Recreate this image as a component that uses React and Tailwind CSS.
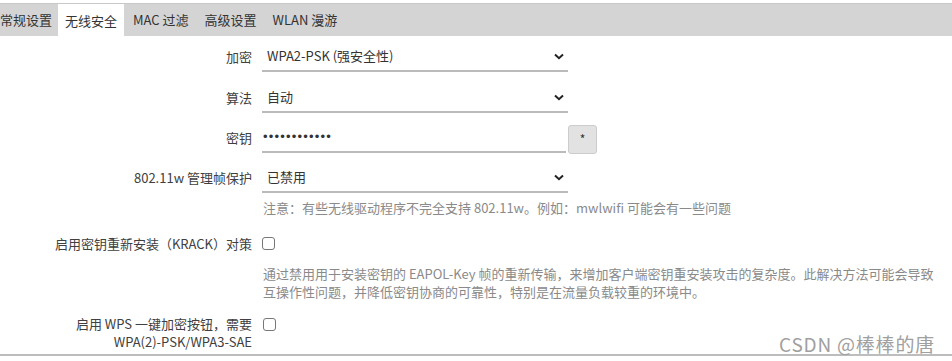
import React from 'react';

const font = { fontFamily: '"Noto Sans CJK SC", "Noto Sans", sans-serif' };

const Chevron = () => (
    <svg width="10" height="7" viewBox="0 0 10 7" className="mr-[2px]">
        <path d="M1 1.5 L5 5.2 L9 1.5" fill="none" stroke="#222" strokeWidth="2" />
    </svg>
);

const SelectBox = ({ value }) => (
    <div className="w-[306px] h-[30px] flex items-center justify-between pl-[5px] pr-[2px] border-b-2 border-[#bbbbbb] text-[13px] text-[#333]">
        <span>{value}</span>
        <Chevron />
    </div>
);

const Row = ({ label, children, className = '' }) => (
    <div className={`flex items-center ${className}`}>
        <div className="w-[253px] text-right text-[13px] text-[#404040] pr-[1px]">{label}</div>
        <div className="ml-[9px] flex items-center">{children}</div>
    </div>
);

const Checkbox = () => (
    <div className="w-[13px] h-[13px] border border-[#777] rounded-[3px] bg-white" />
);

const tabs = ['常规设置', '无线安全', 'MAC 过滤', '高级设置', 'WLAN 漫游'];

export default function App() {
    return (
        <div className="relative w-[952px] h-[361px] bg-white overflow-hidden" style={font}>
            <div className="mt-[3px] h-[33px] bg-[#d4d4d4] border-t border-[#c8c8c8] flex items-stretch text-[13px] text-[#333]">
                <div className="-ml-[5px] flex items-stretch">
                    {tabs.map((t, i) => (
                        <div
                            key={t}
                            className={`flex items-center ${i === 0 ? 'pl-[5px] pr-[6px]' : 'px-[7px]'} ${i === 1 ? 'bg-white h-[34px] px-[7px]' : ''} ${i > 1 ? 'ml-[2px]' : ''}`}
                        >
                            {t}
                        </div>
                    ))}
                </div>
            </div>

            <div className="pt-[6px]">
                <Row label="加密">
                    <SelectBox value="WPA2-PSK (强安全性)" />
                </Row>
                <Row label="算法" className="mt-[11px]">
                    <SelectBox value="自动" />
                </Row>
                <Row label="密钥" className="mt-[10px]">
                    <div
                        className="w-[304px] h-[30px] flex items-center pl-[1px] border-b-2 border-[#bbbbbb] text-[13px] text-[#333] tracking-[1.2px]"
                        style={{ fontFamily: '"Liberation Sans", Arial, sans-serif' }}
                    >
                        ••••••••••••
                    </div>
                    <div className="ml-[2px] w-[29px] h-[29px] mb-[-2px] rounded-[3px] bg-[#e2e2e2] border border-[#cccccc] flex items-center justify-center text-[12px] text-[#333]">
                        *
                    </div>
                </Row>
                <Row label="802.11w 管理帧保护" className="mt-[10px]">
                    <SelectBox value="已禁用" />
                </Row>
                <div className="ml-[263px] mt-[6px] text-[13px] text-[#8a8a8a] leading-[18px]">
                    注意：有些无线驱动程序不完全支持 802.11w。例如：mwlwifi 可能会有一些问题
                </div>

                <Row label="启用密钥重新安装（KRACK）对策" className="mt-[17px]">
                    <Checkbox />
                </Row>
                <div className="ml-[263px] mt-[11px] text-[13px] text-[#8a8a8a] leading-[18px]">
                    通过禁用用于安装密钥的 EAPOL-Key 帧的重新传输，来增加客户端密钥重安装攻击的复杂度。此解决方法可能会导致
                    <br />
                    互操作性问题，并降低密钥协商的可靠性，特别是在流量负载较重的环境中。
                </div>

                <div className="flex items-start mt-[14px]">
                    <div className="w-[253px] text-right text-[13px] text-[#404040] leading-[18px] pr-[1px]">
                        启用 WPS 一键加密按钮，需要
                        <br />
                        WPA(2)-PSK/WPA3-SAE
                    </div>
                    <div className="ml-[10px] mt-[3px]">
                        <Checkbox />
                    </div>
                </div>
            </div>

            <div className="absolute left-0 right-0 top-[354px] h-[2px] bg-[#bdbdbd]" />
            <div className="absolute right-[17px] top-[330px] text-[19px] tracking-[0.8px] text-[#a0a0a0]">CSDN @棒棒的唐</div>
        </div>
    );
}
